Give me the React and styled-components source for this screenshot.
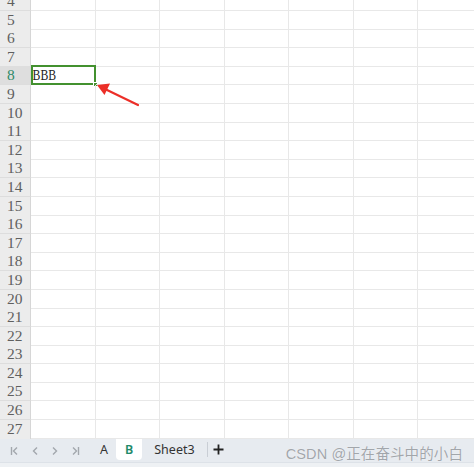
import React from 'react';
import styled, { createGlobalStyle } from 'styled-components';

const Global = createGlobalStyle`
  html, body { margin: 0; padding: 0; background: #ffffff; }
  * { box-sizing: border-box; }
`;

const Sheet = styled.div`
  position: relative;
  width: 474px;
  height: 467px;
  display: flex;
  flex-direction: column;
  overflow: hidden;
  background: #ffffff;
`;

const GridArea = styled.div`
  flex: 1;
  min-height: 0;
  overflow: hidden;
  position: relative;
`;

const Rows = styled.div`
  margin-top: -8px;
  display: flex;
  flex-direction: column;
`;

const Row = styled.div`
  display: grid;
  grid-template-columns: 31px repeat(7, 64.5px);
  height: 18.6px;
  flex-shrink: 0;
`;

const RowHead = styled.div`
  background: ${p => (p.$active ? '#dedede' : '#ececec')};
  color: ${p => (p.$active ? '#2f8a68' : '#5f5f5f')};
  border-bottom: 1px solid #dddddd;
  border-right: 1px solid #d6d6d6;
  font-family: "Liberation Serif", serif;
  font-size: 15.5px;
  line-height: 18px;
  padding-left: 7px;
`;

const Cell = styled.div`
  position: relative;
  border-bottom: 1px solid #e8e8e8;
  border-right: 1px solid #e8e8e8;
  font-family: "Liberation Serif", serif;
  font-size: 15.5px;
  line-height: 18px;
  color: #222222;
`;

const CellText = styled.span`
  display: inline-block;
  padding-left: 2px;
  transform: scaleX(0.76);
  transform-origin: left center;
`;

const Selection = styled.div`
  position: absolute;
  left: 0;
  top: -1px;
  right: -1px;
  bottom: -1px;
  border: 2px solid #43912f;
  pointer-events: none;
`;

const Handle = styled.div`
  position: absolute;
  right: -4px;
  bottom: -4px;
  width: 5px;
  height: 5px;
  background: #43912f;
  border: 1px solid #ffffff;
`;

const Arrow = styled.svg`
  position: absolute;
  left: 94px;
  top: 75px;
  pointer-events: none;
`;

const TabBar = styled.div`
  height: 23px;
  flex-shrink: 0;
  background: #e7ebf0;
  display: flex;
  align-items: stretch;
  font-family: "Noto Sans", "Noto Sans CJK SC", sans-serif;
  font-size: 12.5px;
  position: relative;
`;

const Nav = styled.div`
  display: flex;
  align-items: center;
  padding-left: 5px;
  width: 92px;
`;

const NavBtn = styled.span`
  width: 20px;
  display: flex;
  justify-content: center;
  align-items: center;
  color: #a3a7ad;
`;

const Tab = styled.div`
  display: flex;
  align-items: center;
  justify-content: center;
  padding: 0 ${p => p.$pad || 10}px;
  margin-bottom: 2px;
  background: ${p => (p.$active ? '#ffffff' : 'transparent')};
  color: ${p => (p.$active ? '#1f8a6a' : '#333333')};
  font-weight: ${p => (p.$active ? 600 : 400)};
  border-radius: 0 0 4px 4px;
`;

const Divider = styled.div`
  width: 1px;
  margin: 3px 0 5px 0;
  background: #c9ced5;
`;

const AddBtn = styled.div`
  width: 22px;
  display: flex;
  align-items: center;
  justify-content: center;
  color: #222;
  padding-bottom: 2px;
`;

const Watermark = styled.div`
  position: absolute;
  right: 11px;
  top: 3px;
  font-family: "Liberation Sans", "Noto Sans CJK SC", sans-serif;
  font-size: 14.5px;
  color: #a2a6ab;
  text-shadow: 0 0 1px #ffffff;
  letter-spacing: 0.1px;
`;

const Strip = styled.div`
  height: 5px;
  flex-shrink: 0;
  background: #eef1f4;
  border-top: 1px solid #dde2e8;
`;

const Chevron = ({ dir, bar }) => (
  <svg width="10" height="10" viewBox="0 0 10 10" fill="none" stroke="currentColor" strokeWidth="1.4">
    {dir === 'left' ? <path d="M7 1.5 L3.5 5 L7 8.5" /> : <path d="M3 1.5 L6.5 5 L3 8.5" />}
    {bar && (dir === 'left' ? <path d="M1.5 1 V9" /> : <path d="M8.5 1 V9" />)}
  </svg>
);

const rows = Array.from({ length: 25 }, (_, i) => i + 4);

export default function App() {
  return (
    <>
      <Global />
      <Sheet>
        <GridArea>
          <Rows>
            {rows.map(n => (
              <Row key={n}>
                <RowHead $active={n === 8}>{n}</RowHead>
                {Array.from({ length: 7 }, (_, c) => (
                  <Cell key={c}>
                    {n === 8 && c === 0 && (
                      <>
                        <CellText>BBB</CellText>
                        <Selection>
                          <Handle />
                        </Selection>
                      </>
                    )}
                  </Cell>
                ))}
              </Row>
            ))}
          </Rows>
          <Arrow width="50" height="34" viewBox="0 0 50 34">
            <path d="M44 30 L11 14" stroke="#ec2f28" strokeWidth="2.2" strokeLinecap="round" />
            <path d="M3 10 L16 8.5 L10.5 20 Z" fill="#ec2f28" />
          </Arrow>
        </GridArea>
        <TabBar>
          <Nav>
            <NavBtn><Chevron dir="left" bar /></NavBtn>
            <NavBtn><Chevron dir="left" /></NavBtn>
            <NavBtn><Chevron dir="right" /></NavBtn>
            <NavBtn><Chevron dir="right" bar /></NavBtn>
          </Nav>
          <Tab $pad={8}>A</Tab>
          <Tab $active $pad={9}>B</Tab>
          <Tab $pad={12}>Sheet3</Tab>
          <Divider />
          <AddBtn>
            <svg width="11" height="11" viewBox="0 0 11 11" stroke="#222" strokeWidth="1.8">
              <path d="M5.5 0.5 V10.5 M0.5 5.5 H10.5" />
            </svg>
          </AddBtn>
          <Watermark>CSDN @正在奋斗中的小白</Watermark>
        </TabBar>
        <Strip />
      </Sheet>
    </>
  );
}
